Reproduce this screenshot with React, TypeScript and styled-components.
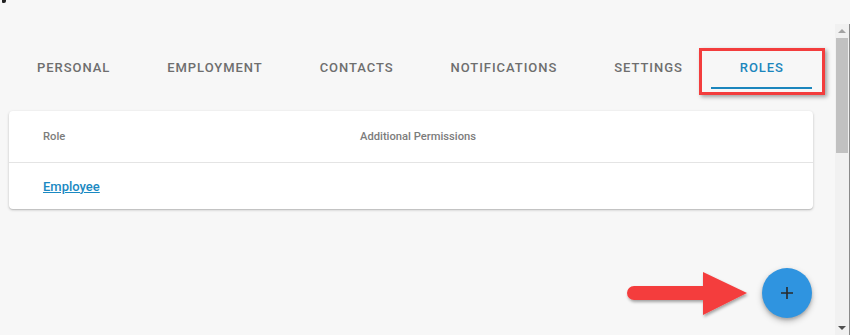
import React from "react";
import styled, { createGlobalStyle } from "styled-components";

const Global = createGlobalStyle`
  html, body { margin: 0; padding: 0; }
  body {
    background: #f7f7f7;
    font-family: Roboto, "Liberation Sans", Arial, sans-serif;
    width: 850px;
    height: 335px;
    overflow: hidden;
  }
`;

const Page = styled.div`
  position: relative;
  width: 850px;
  height: 335px;
  display: flex;
  flex-direction: column;
  background: #f7f7f7;
`;

const TopStrip = styled.div`
  height: 24px;
  flex: none;
  padding-left: 2px;
`;

const Mark = styled.div`
  width: 4px;
  height: 3px;
  background: #222;
  border-radius: 0 0 2px 1px;
`;

const Body = styled.div`
  flex: 1;
  display: flex;
  min-height: 0;
`;

const Content = styled.div`
  flex: 1;
  min-width: 0;
  padding: 23px 22px 0 8px;
  display: flex;
  flex-direction: column;
`;

const Tabs = styled.div`
  display: flex;
  align-items: stretch;
`;

const Tab = styled.div<{ $active?: boolean }>`
  position: relative;
  height: 42px;
  padding: 0 28px 0 29px;
  display: flex;
  align-items: center;
  justify-content: center;
  font-size: 13px;
  font-weight: 500;
  letter-spacing: 0.95px;
  color: ${(p) => (p.$active ? "#1b86bd" : "#6e6e6e")};
  border-bottom: 2px solid ${(p) => (p.$active ? "#1b86bd" : "transparent")};
  box-sizing: border-box;
  white-space: nowrap;
  flex: none;
`;

const Highlight = styled.div`
  position: absolute;
  left: -12px;
  right: -13px;
  top: 1px;
  bottom: -8px;
  border: 3px solid #f33d3d;
  box-shadow: 2px 2px 4px rgba(0, 0, 0, 0.35);
  pointer-events: none;
`;

const Card = styled.div`
  margin: 22px 0 0 1px;
  background: #ffffff;
  border-radius: 4px;
  box-shadow: 0 1px 3px rgba(0, 0, 0, 0.2), 0 1px 1px rgba(0, 0, 0, 0.1);
  overflow: hidden;
`;

const Row = styled.div<{ $head?: boolean }>`
  display: grid;
  grid-template-columns: 317px 1fr;
  align-items: center;
  padding-left: 34px;
  height: ${(p) => (p.$head ? "52px" : "46px")};
  border-bottom: ${(p) => (p.$head ? "1px solid #e4e4e4" : "none")};
  box-sizing: border-box;
`;

const HeadCell = styled.div`
  font-size: 11.2px;
  font-weight: 500;
  color: #7c7c7c;
`;

const RoleLink = styled.a`
  font-size: 13px;
  font-weight: 500;
  color: #1a89c2;
  text-decoration: underline;
  cursor: pointer;
`;

const Scrollbar = styled.div`
  width: 15px;
  flex: none;
  background: #f1f1f1;
  border-right: 1px solid #8a8a8a;
  box-sizing: border-box;
  display: flex;
  flex-direction: column;
  align-items: center;
`;

const ArrowBtn = styled.div<{ $down?: boolean; $dim?: boolean }>`
  height: 14px;
  width: 100%;
  flex: none;
  display: flex;
  align-items: center;
  justify-content: center;
  &::after {
    content: "";
    width: 0;
    height: 0;
    border-left: 4px solid transparent;
    border-right: 4px solid transparent;
    ${(p) =>
      p.$down
        ? `border-top: 4px solid ${p.$dim ? "#a3a3a3" : "#505050"};`
        : `border-bottom: 4px solid ${p.$dim ? "#a3a3a3" : "#505050"};`}
  }
`;

const Track = styled.div`
  flex: 1;
  width: 100%;
  display: flex;
  flex-direction: column;
  align-items: flex-start;
`;

const Thumb = styled.div`
  width: 12px;
  margin-left: 1px;
  height: 115px;
  background: #c1c1c1;
`;

const Fab = styled.button`
  position: absolute;
  left: 762px;
  top: 268px;
  width: 50px;
  height: 50px;
  border-radius: 50%;
  border: none;
  background: #2f94e0;
  box-shadow: 0 3px 6px rgba(0, 0, 0, 0.25), 0 2px 3px rgba(0, 0, 0, 0.15);
  display: flex;
  align-items: center;
  justify-content: center;
  padding: 0;
  cursor: pointer;
`;

const Annotation = styled.svg`
  position: absolute;
  left: 620px;
  top: 266px;
  overflow: visible;
  pointer-events: none;
`;

export default function App() {
  const tabs = ["PERSONAL", "EMPLOYMENT", "CONTACTS", "NOTIFICATIONS", "SETTINGS"];
  return (
    <>
      <Global />
      <Page>
        <TopStrip>
          <Mark />
        </TopStrip>
        <Body>
          <Content>
            <Tabs>
              {tabs.map((t) => (
                <Tab key={t}>{t}</Tab>
              ))}
              <Tab $active>
                ROLES
                <Highlight />
              </Tab>
            </Tabs>
            <Card>
              <Row $head>
                <HeadCell>Role</HeadCell>
                <HeadCell>Additional Permissions</HeadCell>
              </Row>
              <Row>
                <RoleLink>Employee</RoleLink>
                <div />
              </Row>
            </Card>
          </Content>
          <Scrollbar>
            <ArrowBtn $dim />
            <Track>
              <Thumb />
            </Track>
            <ArrowBtn $down />
          </Scrollbar>
        </Body>
        <Annotation width="135" height="60" viewBox="0 0 135 60">
          <defs>
            <filter id="sh" x="-20%" y="-20%" width="140%" height="160%">
              <feDropShadow dx="1" dy="2" stdDeviation="1.5" floodColor="#000" floodOpacity="0.35" />
            </filter>
          </defs>
          <path
            d="M14 20 H83 V6 L127 27 L83 49 V34 H14 A7 7 0 0 1 14 20 Z"
            fill="#f43e3e"
            filter="url(#sh)"
          />
        </Annotation>
        <Fab aria-label="Add">
          <svg width="14" height="14" viewBox="0 0 14 14">
            <path d="M7 1 V13 M1 7 H13" stroke="#2a2a2a" strokeWidth="1.6" />
          </svg>
        </Fab>
      </Page>
    </>
  );
}
